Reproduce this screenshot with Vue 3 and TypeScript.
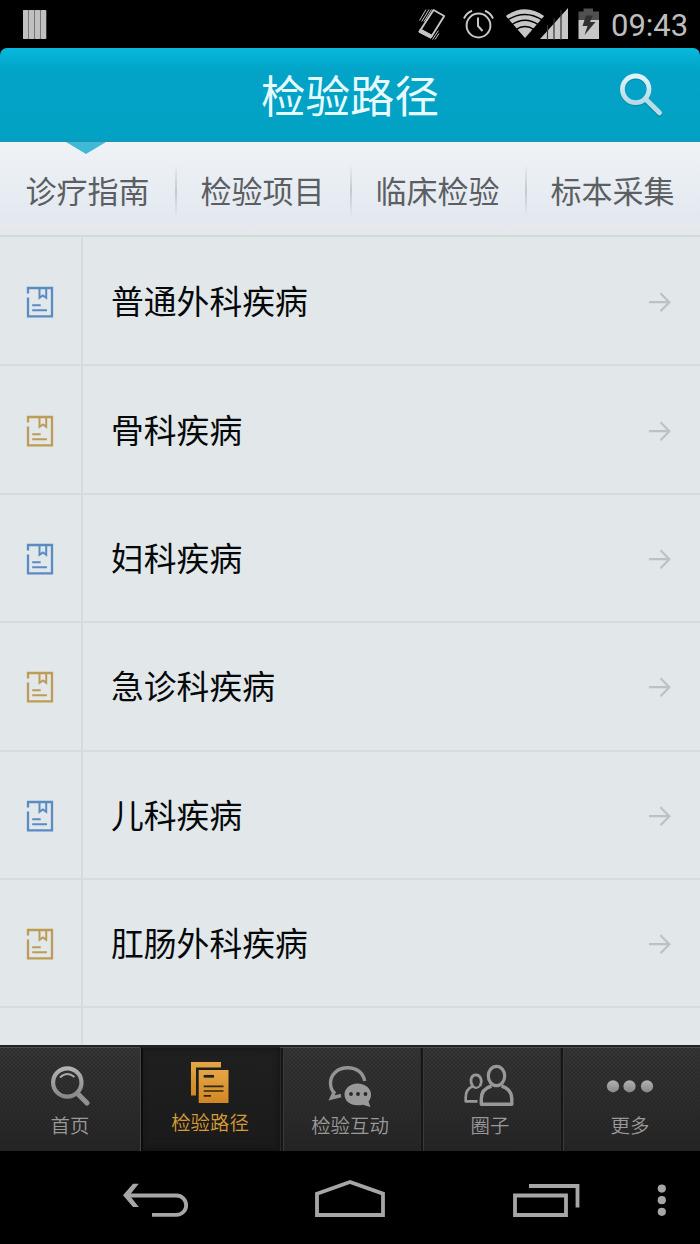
<script setup lang="ts">
interface Disease {
  name: string
  tone: 'blue' | 'gold'
}
interface NavItem {
  label: string
  icon: 'search' | 'docs' | 'chat' | 'people' | 'more'
}

const tabs: string[] = ['诊疗指南', '检验项目', '临床检验', '标本采集']

const diseases: Disease[] = [
  { name: '普通外科疾病', tone: 'blue' },
  { name: '骨科疾病', tone: 'gold' },
  { name: '妇科疾病', tone: 'blue' },
  { name: '急诊科疾病', tone: 'gold' },
  { name: '儿科疾病', tone: 'blue' },
  { name: '肛肠外科疾病', tone: 'gold' },
]

const nav: NavItem[] = [
  { label: '首页', icon: 'search' },
  { label: '检验路径', icon: 'docs' },
  { label: '检验互动', icon: 'chat' },
  { label: '圈子', icon: 'people' },
  { label: '更多', icon: 'more' },
]
const current = 1
</script>

<template>
  <div class="screen">
    <div class="status">
      <svg class="bars" width="24" height="30" viewBox="0 0 24 30">
        <rect x="0" y="0" width="23.500" height="29" rx="1" fill="#777" />
        <g fill="#c0c0c0">
          <rect x="0" y="0" width="5" height="29" rx="1" />
          <rect x="6" y="0" width="5" height="29" rx="1" />
          <rect x="12" y="0" width="5" height="29" rx="1" />
          <rect x="18" y="0" width="5" height="29" rx="1" />
        </g>
      </svg>
      <div class="status-right">
        <svg width="40" height="48" viewBox="416 0 40 48" fill="none" stroke="#c6c6c6">
          <path d="M433.500 10L444.200 16L431.500 36.500L420.500 30Z" stroke-width="1.900" stroke-linejoin="round" />
          <path d="M420.500 29L432.500 35.500L430.800 38.300L418.700 32Z" fill="#c6c6c6" stroke-width="1" stroke-linejoin="round" />
          <path d="M419.500 20.500L426 9.500M421.700 21.500L429 9.500M424 21.500L431.500 9.500" stroke-width="1" />
          <path d="M432.500 39.500L438.500 30.500M435 39.500L439 33.500" stroke-width="1" />
        </svg>
        <svg width="44" height="48" viewBox="456 0 44 48" fill="none" stroke="#c6c6c6">
          <circle cx="478.500" cy="25.500" r="11.900" stroke-width="2" />
          <path d="M478 17.500V26L482.500 31M464 18.500Q466.500 13 472 10.800M485 10.800Q490.500 13 493 18.500" stroke-width="2" />
        </svg>
        <svg width="72" height="48" viewBox="500 0 72 48">
          <path d="M525 38L505.800 16Q525 2.500 544.200 16Z" fill="#c6c6c6" />
          <path d="M507 20.300Q525 8.500 543 20.300M511.300 25Q525 15.500 538.700 25M515.500 29.800Q525 23.300 534.500 29.800" fill="none" stroke="#000" stroke-width="1.500" />
          <path d="M540 39L568 8V39Z" fill="#c6c6c6" />
          <path d="M547.500 25V40M554 18V40M561 10V40" stroke="#333" stroke-width="1.200" />
        </svg>
        <svg width="34" height="48" viewBox="572 0 34 48">
          <path d="M578.500 11.500H583.500V8.500H593V11.500H599V20H578.500Z" fill="#505050" />
          <path d="M578.500 20H599V39H578.500Z" fill="#c6c6c6" />
          <path d="M586 15.500H593L590 22H595.500L584.500 35L587.500 26H582.500Z" fill="#303030" />
        </svg>
        <span class="time">09:43</span>
      </div>
    </div>

    <header class="header">
      <h1>检验路径</h1>
      <svg class="find" width="48" height="48" viewBox="616 71 48 48">
        <defs>
          <linearGradient id="lens" x1="0" y1="0" x2="0" y2="1">
            <stop offset="0" stop-color="#e0f4f8" />
            <stop offset="1" stop-color="#b5dbe7" />
          </linearGradient>
        </defs>
        <g transform="translate(0 1)" fill="none" stroke="#087f9a" opacity=".7">
          <circle cx="635.700" cy="89.300" r="13.300" stroke-width="5" />
          <path d="M646 99.500L659.500 113" stroke-width="5.500" stroke-linecap="round" />
        </g>
        <path d="M646 99.500L659.500 112.800" stroke="#b9dde8" stroke-width="5" stroke-linecap="round" />
        <circle cx="635.700" cy="89.300" r="13.300" fill="none" stroke="url(#lens)" stroke-width="4.800" />
      </svg>
    </header>

    <nav class="tabs">
      <span v-for="(tab, i) in tabs" :key="tab" class="tab" :class="{ selected: i === 0 }">{{ tab }}</span>
    </nav>

    <main class="list">
      <div v-for="d in diseases" :key="d.name" class="row">
        <div class="mark" :class="d.tone">
          <svg width="28" height="32" viewBox="0 0 28 32" fill="none" stroke="currentColor">
            <path d="M2 7.500V2H26V30.300H2V11.500" stroke-width="2.300" />
            <path d="M13.500 2V11.800L16.900 9.400L20.200 11.800V2" stroke-width="2" />
            <path d="M6.200 19.300H14.700M6.200 24.300H21" stroke-width="2.100" />
          </svg>
        </div>
        <div class="name">{{ d.name }}</div>
        <svg class="go" width="22" height="22" viewBox="0 0 22 22" fill="none" stroke="#bcc1c4" stroke-width="2.200">
          <path d="M0 11.200H20.500M11.500 2.200L20.300 11.200L11.500 20.200" />
        </svg>
      </div>
      <div class="row"><div class="mark"></div></div>
    </main>

    <footer class="nav">
      <div v-for="(item, i) in nav" :key="item.label" class="nav-item" :class="{ active: i === current }">
        <svg v-if="item.icon === 'search'" width="60" height="48" viewBox="40 1060 60 48">
          <defs>
            <linearGradient id="metal" x1="0" y1="0" x2="0" y2="1">
              <stop offset="0" stop-color="#b2b2b2" />
              <stop offset="1" stop-color="#888" />
            </linearGradient>
          </defs>
          <path d="M77.500 1093.500L87 1103" stroke="#929292" stroke-width="5.200" stroke-linecap="round" />
          <circle cx="67.300" cy="1082.500" r="14.200" fill="none" stroke="url(#metal)" stroke-width="4.200" />
          <path d="M60 1077.500Q67 1070.800 74.500 1077" fill="none" stroke="#aaa" stroke-width="1.800" />
        </svg>
        <svg v-else-if="item.icon === 'docs'" width="60" height="48" viewBox="180 1058 60 48">
          <defs>
            <linearGradient id="amber" x1="0" y1="0" x2="0" y2="1">
              <stop offset="0" stop-color="#e6a646" />
              <stop offset="1" stop-color="#d08722" />
            </linearGradient>
          </defs>
          <path d="M191 1062H221V1067.500H196V1095.500H191Z" fill="url(#amber)" />
          <path d="M198.700 1070H228.500V1103H198.700Z" fill="url(#amber)" />
          <path d="M203.700 1076.300H214" stroke="#24211c" stroke-width="2.700" />
          <path d="M203.700 1086.400H223.500M203.700 1091H223.500M203.700 1095.800H211" stroke="#332716" stroke-width="1.700" />
        </svg>
        <svg v-else-if="item.icon === 'chat'" width="60" height="48" viewBox="320 1060 60 48">
          <path d="M364.700 1081C363.200 1072.500 356 1067.800 348 1067.800C337 1067.800 330.500 1075 330.500 1083C330.500 1087 332 1090.500 334 1092.500L331.500 1098L341 1095.500" fill="none" stroke="#949494" stroke-width="3.400" />
          <path d="M357.500 1083.500C365.500 1083.500 371 1088.500 371 1094.500C371 1097.500 370 1100 368.500 1101.500L370.500 1107L363 1104.700C352 1107 344.500 1102 344.500 1094.500C344.500 1088.500 350 1083.500 357.500 1083.500Z" fill="#999" />
          <g fill="#292929">
            <circle cx="351" cy="1094" r="1.900" />
            <circle cx="358" cy="1094" r="1.900" />
            <circle cx="365.500" cy="1094" r="1.900" />
          </g>
        </svg>
        <svg v-else-if="item.icon === 'people'" width="60" height="48" viewBox="460 1060 60 48" fill="none" stroke="#989898" stroke-linejoin="round">
          <path d="M491.500 1086C484.500 1088 481.300 1092.500 481.300 1099V1104.300H511.800V1099C511.800 1092.500 508.500 1088 501.500 1086" stroke-width="3.400" />
          <ellipse cx="496.500" cy="1076" rx="8.200" ry="9.700" stroke-width="3.200" />
          <path d="M480 1086C483 1080.500 480.300 1074.800 475.800 1074.800C471 1074.800 469.300 1081 472.800 1086.300C468.300 1088 465.700 1092 465.700 1097.500V1101.300H477.500" stroke-width="2.700" />
          <path d="M472.800 1086.300Q476 1089.500 480 1086" stroke-width="2.200" />
        </svg>
        <svg v-else width="60" height="48" viewBox="600 1060 60 48" fill="url(#metal)">
          <circle cx="613" cy="1086.300" r="6.100" />
          <circle cx="629.500" cy="1086.300" r="6.100" />
          <circle cx="647" cy="1086.300" r="6.100" />
        </svg>
        <span class="nav-label">{{ item.label }}</span>
      </div>
    </footer>

    <div class="keys">
      <svg width="700" height="93" viewBox="0 1151 700 93" fill="none" stroke="#a6a6a6" stroke-width="3.800">
        <path d="M127 1195.500H176.500A9.600 9.600 0 0 1 176.500 1214.800H152" />
        <path d="M133 1183.800H138.800L129.500 1195.300L138.800 1207H133L123 1195.300Z" fill="#a6a6a6" stroke="none" />
        <path d="M317 1193.700L350 1182L383 1193.700V1215H317Z" />
        <path d="M515 1195.500H566V1215H515Z" />
        <path d="M529 1186H577.500V1207.500" />
        <g fill="#a6a6a6" stroke="none">
          <circle cx="661.800" cy="1188.600" r="4.100" />
          <circle cx="661.800" cy="1200.200" r="4.100" />
          <circle cx="661.800" cy="1211.800" r="4.100" />
        </g>
      </svg>
    </div>
  </div>
</template>

<style>
body {
  background: #000;
}
</style>

<style scoped>
.screen {
  display: flex;
  flex-direction: column;
  width: 700px;
  height: 1244px;
  overflow: hidden;
  background: #000;
  font-family: "Noto Sans CJK SC", sans-serif;
}
svg {
  display: block;
  flex: none;
}
.status {
  display: flex;
  justify-content: space-between;
  height: 48px;
  flex: none;
}
.bars {
  margin: 10px 0 0 23px;
}
.status-right {
  display: flex;
  width: 284px;
}
.time {
  padding-left: 5px;
  font: 400 31px/51px Roboto, sans-serif;
  color: #bebebe;
}
.header {
  display: flex;
  align-items: center;
  height: 94px;
  flex: none;
  border-radius: 7px 7px 0 0;
  background: linear-gradient(#08b9dd, #03abcf 14px, #02a3c6 25px, #02a2c5 90px, #1598b5);
}
h1 {
  flex: 1;
  margin: 0 0 0 84px;
  font-size: 44.500px;
  font-weight: 400;
  line-height: 92px;
  height: 94px;
  text-align: center;
  color: #e6fbff;
}
.find {
  margin-right: 36px;
}
.tabs {
  display: flex;
  height: 93px;
  flex: none;
  border-bottom: 2px solid #d2d9db;
  background: linear-gradient(#eff3f6, #e4e9f1 80%, #e4e8eb);
}
.tab {
  position: relative;
  width: 175px;
  font-size: 31px;
  line-height: 96px;
  text-align: center;
  color: #5b5f62;
}
.tab + .tab::before {
  content: "";
  position: absolute;
  left: 0;
  top: 22px;
  width: 2px;
  height: 54px;
  background: linear-gradient(transparent, #c3c9ce 50%, transparent);
}
.selected::after {
  content: "";
  position: absolute;
  left: 66px;
  top: 0;
  border: solid transparent;
  border-width: 12px 20.500px 0;
  border-top-color: #40b9d5;
}
.list {
  box-sizing: border-box;
  height: 808px;
  flex: none;
  padding-top: 1px;
  overflow: hidden;
  background: #e2e7ea;
}
.row {
  display: flex;
  align-items: center;
  box-sizing: border-box;
  height: 128.400px;
  border-bottom: 2px solid #d5dbde;
}
.mark {
  display: flex;
  align-items: center;
  justify-content: center;
  box-sizing: border-box;
  width: 83px;
  height: 100%;
  padding: 2px 1px 0 0;
  border-right: 2px solid #d5dbde;
}
.blue {
  color: #5b8bc3;
}
.gold {
  color: #bd9c55;
}
.name {
  flex: 1;
  padding: 0 0 2px 28px;
  font-size: 32.800px;
  line-height: 48px;
  color: #060809;
}
.go {
  margin: 2px 29px 0 0;
}
.nav {
  display: flex;
  box-sizing: border-box;
  height: 106px;
  flex: none;
  border-top: 2px solid #202225;
  background:
    repeating-linear-gradient(45deg, rgba(0, 0, 0, .09) 0 1.400px, transparent 1.400px 2.828px),
    repeating-linear-gradient(-45deg, rgba(0, 0, 0, .09) 0 1.400px, transparent 1.400px 2.828px),
    linear-gradient(#373737, #272727);
}
.nav-item {
  display: flex;
  flex: 1;
  flex-direction: column;
  align-items: center;
  box-sizing: border-box;
  padding-top: 12px;
  border-top: 1px solid #4b4c4d;
  color: #999;
}
.nav-item + .nav-item {
  box-shadow: inset 1px 0 #292929, inset 3px 0 #161616, inset 4px 0 #393939;
}
.nav-item + .active {
  padding-top: 10px;
  border-top-color: #222;
  background: rgba(20, 20, 20, .6);
  box-shadow: inset 1px 0 #444, inset 3px 0 #0c0c0c, inset 0 0 6px #111;
  color: #d69a38;
}
.nav-label {
  font-size: 19.400px;
  font-weight: 350;
  line-height: 34px;
}
.active .nav-label {
  line-height: 32px;
}
.keys {
  height: 93px;
  flex: none;
}
</style>
